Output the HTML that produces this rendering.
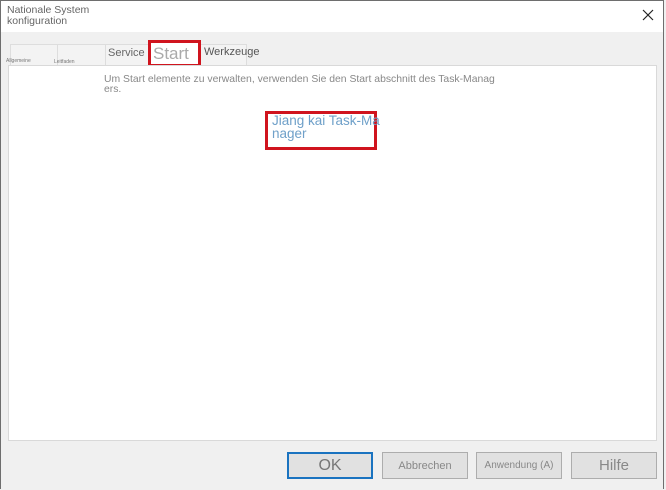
<!DOCTYPE html><html><head><style>
body{margin:0;width:666px;height:490px;overflow:hidden;font-family:"Liberation Sans",sans-serif;background:#f0f0f0;position:relative}
.a{position:absolute}
.btn{position:absolute;top:452px;height:27px;background:#e1e1e1;border:1px solid #adadad;color:#888;text-align:center;line-height:26px;box-sizing:border-box}
</style></head><body>
<div class="a" style="left:0;top:0;width:664px;height:489px;border:1px solid #6e6e6e;border-bottom:none;box-sizing:border-box"></div>
<div class="a" style="left:1px;top:1px;width:662px;height:31px;background:#fff"></div>
<div class="a" style="left:7px;top:5px;font-size:10.5px;color:#666;line-height:11px">Nationale System<br>konfiguration</div>
<svg class="a" style="left:642px;top:9px" width="12" height="12"><path d="M1 1L11 11M11 1L1 11" stroke="#222" stroke-width="1.2"/></svg>
<div class="a" style="left:10px;top:44px;width:237px;height:22px;background:#f3f3f3;border:1px solid #ddd;border-bottom:none;box-sizing:border-box"></div>
<div class="a" style="left:57px;top:44px;width:1px;height:21px;background:#ddd"></div>
<div class="a" style="left:105px;top:44px;width:1px;height:21px;background:#ddd"></div>
<div class="a" style="left:6px;top:58px;font-size:5px;color:#777">Allgemeine</div>
<div class="a" style="left:54px;top:59px;font-size:5px;color:#777">Leitfaden</div>
<div class="a" style="left:108px;top:47px;font-size:11px;color:#666">Service</div>
<div class="a" style="left:148px;top:40px;width:53px;height:27px;border:3px solid #d0141e;box-sizing:border-box;background:#fff"></div>
<div class="a" style="left:153px;top:44px;font-size:17px;color:#aaa">Start</div>
<div class="a" style="left:204px;top:46px;font-size:11px;color:#555">Werkzeuge</div>
<div class="a" style="left:8px;top:65px;width:649px;height:376px;background:#fff;border:1px solid #d9d9d9;box-sizing:border-box"></div>
<div class="a" style="left:104px;top:75px;font-size:10.4px;color:#888;line-height:10px;white-space:nowrap">Um Start elemente zu verwalten, verwenden Sie den Start abschnitt des Task-Manag<br>ers.</div>
<div class="a" style="left:265px;top:111px;width:112px;height:39px;border:3px solid #d0141e;box-sizing:border-box"></div>
<div class="a" style="left:272px;top:114px;font-size:13.5px;color:#6fa0c9;line-height:13px;white-space:nowrap">Jiang kai Task-Ma<br>nager</div>
<div class="btn" style="left:287px;width:86px;border:2px solid #1a73c0;font-size:16px;line-height:24px;color:#777">OK</div>
<div class="btn" style="left:382px;width:86px;font-size:11px">Abbrechen</div>
<div class="btn" style="left:476px;width:86px;font-size:10px">Anwendung (A)</div>
<div class="btn" style="left:571px;width:86px;font-size:15px">Hilfe</div>
</body></html>
